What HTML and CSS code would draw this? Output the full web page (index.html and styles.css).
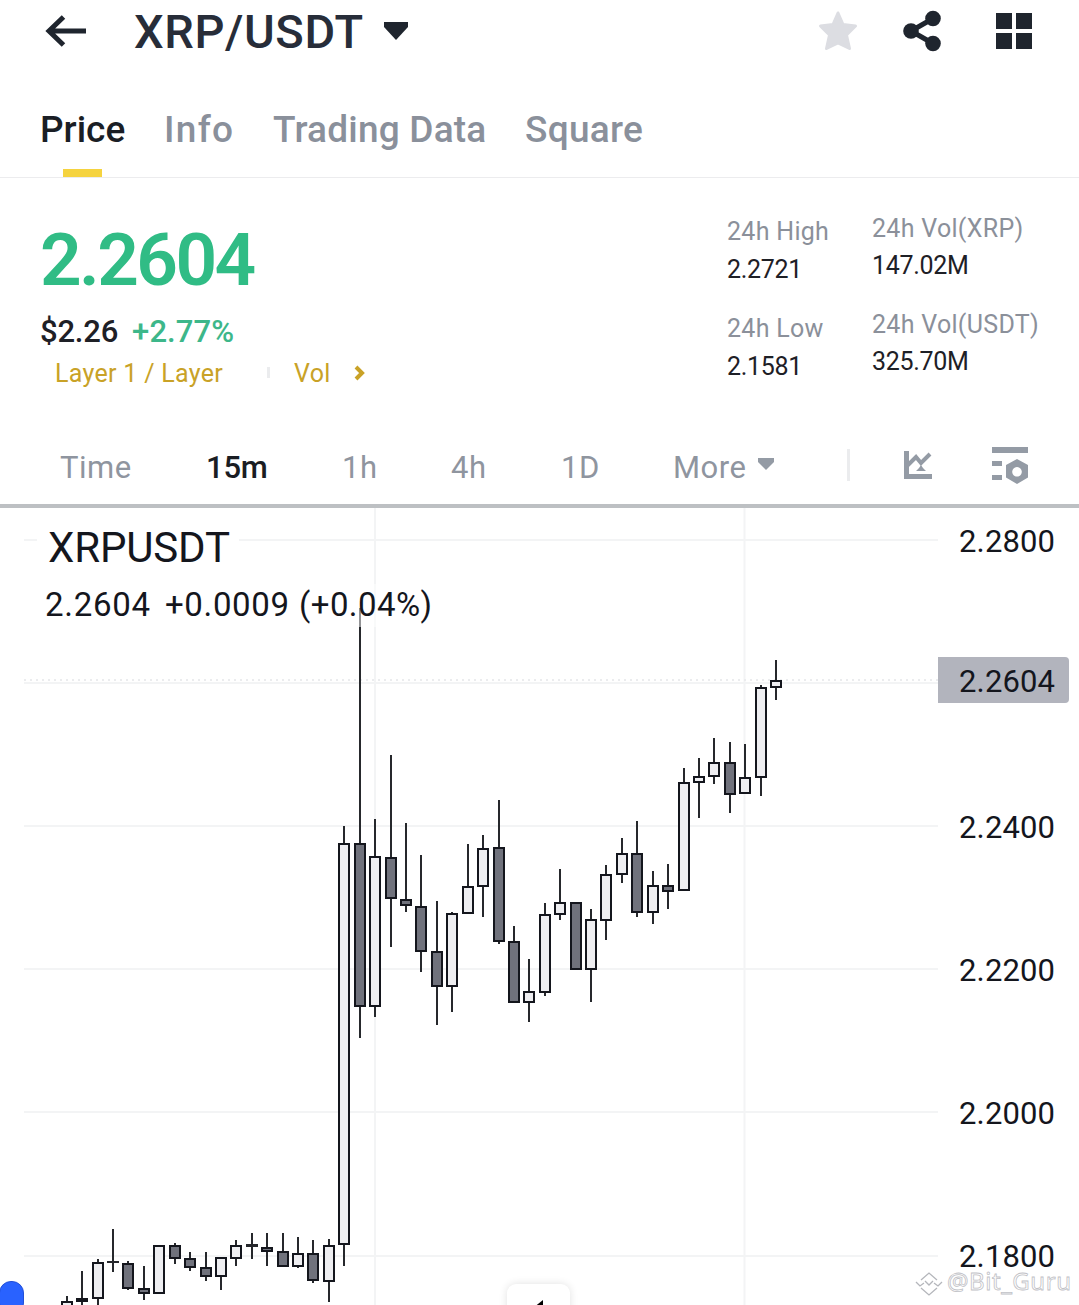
FILE: index.html
```html
<!DOCTYPE html>
<html lang="en">
<head>
    <meta charset="UTF-8" />
    <meta name="viewport" content="width=device-width, initial-scale=1" />
    <title>XRP/USDT</title>
    <link rel="stylesheet" href="styles.css">
</head>
<body>
    <header class="top_bar">
        <svg class="back" width="42" height="34" viewBox="0 0 42 34">
            <path d="M18.500 3L4 17l14.500 14M4 17h37" />
        </svg>
        <h1>XRP/USDT</h1>
        <svg class="pair_arrow" width="24" height="18" viewBox="0 0 24 18">
            <path d="M0 0h24v5L12 18 0 5z" />
        </svg>
        <div class="top_icons">
            <svg width="40" height="42" viewBox="0 0 40 42">
                <path class="star" d="M20 3l5 11.500 12.500 1.500-9 9 3 13.500L20 33 8.500 38.500l3-13.500-9-9L15 14.500z" />
            </svg>
            <svg width="40" height="42" viewBox="0 0 40 42">
                <path class="share_line" d="M31 8.500L9 21l22 12.500" />
                <circle cx="31" cy="8.500" r="7.800" />
                <circle cx="9" cy="21" r="7.800" />
                <circle cx="31" cy="33.500" r="7.800" />
            </svg>
            <svg width="36" height="36" viewBox="0 0 36 36">
                <path d="M0 0h16v16H0zM20 0h16v16H20zM0 20h16v16H0zM20 20h16v16H20z" />
            </svg>
        </div>
    </header>

    <nav class="tabs">
        <a class="tab active">Price</a>
        <a class="tab info">Info</a>
        <a class="tab data">Trading Data</a>
        <a class="tab square">Square</a>
    </nav>

    <section class="summary">
        <div class="price_block">
            <div class="last_price">2.2604</div>
            <div class="change_row">
                <span class="usd">$2.26</span>
                <span class="change">+2.77%</span>
            </div>
            <div class="tags">
                <span class="layer">Layer 1 / Layer</span>
                <span class="tag_line"></span>
                <span class="vol">Vol</span>
                <svg width="11" height="16" viewBox="0 0 11 16">
                    <path d="M2 2l6 6-6 6" />
                </svg>
            </div>
        </div>
        <div class="stats high_low">
            <div class="stat_name">24h High</div>
            <div class="stat_value">2.2721</div>
            <div class="stat_name">24h Low</div>
            <div class="stat_value">2.1581</div>
        </div>
        <div class="stats volumes">
            <div class="stat_name">24h Vol(XRP)</div>
            <div class="stat_value">147.02M</div>
            <div class="stat_name">24h Vol(USDT)</div>
            <div class="stat_value">325.70M</div>
        </div>
    </section>

    <div class="intervals">
        <span class="time">Time</span>
        <span class="m15 active">15m</span>
        <span class="h1">1h</span>
        <span class="h4">4h</span>
        <span class="d1">1D</span>
        <span class="more">More</span>
        <svg class="more_arrow" width="16" height="12" viewBox="0 0 16 12">
            <path d="M0 0h16v4L8 12 0 4z" />
        </svg>
        <i class="interval_line"></i>
        <svg class="chart_icon" width="28" height="28" viewBox="0 0 28 28">
            <path d="M0 0h5v23h23v5H0z" />
            <path class="zigzag" d="M3 15l9-9 5 6 9-9" />
            <path d="M17 14l2 3 3 3h-10l3-3z" />
        </svg>
        <svg class="settings_icon" width="36" height="37" viewBox="0 0 36 37">
            <path d="M0 0h36v6H0zM0 14h10v5H0zM0 28h10v5H0z" />
            <path fill-rule="evenodd" d="M25 12l11 6v12.500L25 37l-11-6.500V18zM25 20a4.800 4.800 0 1 0 .01 0z" />
        </svg>
    </div>

    <main class="chart_box">
        <svg class="chart" width="1079" height="797" viewBox="0 508 1079 797">
            <g class="grid">
                <path d="M24 540H938M24 683H938M24 826H938M24 969H938M24 1112H938M24 1256H938" />
                <path d="M375 508V1305M744.500 508V1305" />
            </g>
            <path class="last_line" d="M24 680H938" />
            <g id="candles"></g>

            <rect class="legend_bg" x="37" y="520" width="202" height="56" />
            <rect class="legend_bg2" x="37" y="584" width="403" height="43" />
            <text class="symbol" x="48" y="562" textLength="182">XRPUSDT</text>
            <text class="legend" x="45" y="616" textLength="105">2.2604</text>
            <text class="legend" x="165" y="616" textLength="124">+0.0009</text>
            <text class="legend" x="299" y="616" textLength="133">(+0.04%)</text>

            <path class="price_tag" d="M938 657h127a4 4 0 0 1 4 4v38a4 4 0 0 1-4 4H938z" />
            <g class="axis">
                <text x="959" y="552" textLength="96">2.2800</text>
                <text x="959" y="692" textLength="96">2.2604</text>
                <text x="959" y="838" textLength="96">2.2400</text>
                <text x="959" y="981" textLength="96">2.2200</text>
                <text x="959" y="1124" textLength="96">2.2000</text>
                <text x="959" y="1267" textLength="96">2.1800</text>
            </g>

            <g class="watermark">
                <path d="M921 1280l8-7 8 7M916 1282l4 4 4-3M934 1283l4 3 4-4M925 1281l4 4 4-4M921 1288l8 7 8-7" />
                <text x="947" y="1290" textLength="124">@Bit_Guru</text>
            </g>
        </svg>
        <div class="blue_button"></div>
        <div class="collapse_button">
            <svg width="16" height="16" viewBox="0 0 16 16">
                <path d="M12 1v15H2V9z" />
            </svg>
        </div>
    </main>

    <script src="script.js"></script>
</body>
</html>
```
FILE: styles.css
```css
* {
    box-sizing: border-box;
}
body, html {
    margin: 0;
    padding: 0;
    height: 1305px;
    overflow: hidden;
    font-family: Roboto, "Liberation Sans", sans-serif;
    background-color: #fff;
    color: #1e2329;
}
svg {
    display: block;
    flex: none;
}
.top_bar {
    display: flex;
    align-items: center;
    height: 61px;
    padding: 0 47px 0 45px;
    fill: #1f252e;
}
.back path {
    fill: none;
    stroke: #1f252e;
    stroke-width: 5;
}
.top_bar h1 {
    width: 228px;
    margin: 3px 0 0 47px;
    font-size: 47px;
    font-weight: 500;
    line-height: 62px;
    letter-spacing: 0.6px;
    color: #272d39;
    white-space: nowrap;
}
.pair_arrow {
    margin-left: 22px;
}
.top_icons {
    display: flex;
    align-items: center;
    gap: 44px;
    margin-left: auto;
}
.top_icons svg:last-child {
    margin-left: 10px;
}
.star {
    fill: #dcdde2;
    stroke: #dcdde2;
    stroke-width: 3;
    stroke-linejoin: round;
}
.share_line {
    fill: none;
    stroke: #1f252e;
    stroke-width: 5;
}
.tabs {
    display: flex;
    height: 117px;
    padding: 45px 0 0 40px;
    border-bottom: 1px solid #ececee;
    font-size: 37px;
    font-weight: 500;
    line-height: 48px;
    color: #8a909b;
    white-space: nowrap;
}
.tab {
    position: relative;
    width: 84px;
    margin-right: 40px;
}
.tab.active {
    color: #1a1e25;
}
.tab.active::after {
    content: "";
    position: absolute;
    left: 23px;
    bottom: 0;
    width: 39px;
    height: 8px;
    background-color: #f5d33f;
}
.tab.info {
    width: 69px;
    letter-spacing: 1.3px;
}
.tab.data {
    width: 212px;
    letter-spacing: 0.2px;
}
.tab.square {
    letter-spacing: 0.3px;
}
.summary {
    display: flex;
    height: 252px;
}
.price_block {
    width: 727px;
    padding: 42px 0 0 40px;
}
.last_price {
    font-size: 73px;
    font-weight: 600;
    line-height: 80px;
    letter-spacing: -2.6px;
    color: #30bc85;
}
.change_row {
    display: flex;
    gap: 14px;
    margin-top: 12px;
    font-size: 31px;
    font-weight: 500;
    line-height: 40px;
    letter-spacing: -0.2px;
    color: #1e2026;
}
.change_row .change {
    letter-spacing: 0.1px;
    color: #3db78a;
}
.tags {
    display: flex;
    align-items: center;
    margin-top: 2px;
    padding-left: 15px;
    font-size: 25px;
    line-height: 40px;
    letter-spacing: 0.3px;
    color: #c9a227;
}
.layer {
    width: 212px;
}
.tag_line {
    width: 3px;
    height: 11px;
    margin: -3px 24px 0 0;
    background-color: #ebecee;
}
.vol {
    width: 60px;
}
.tags svg {
    margin-top: -3px;
}
.tags path {
    fill: none;
    stroke: #c9a227;
    stroke-width: 4;
}
.stats {
    padding-top: 35px;
    font-size: 25px;
    white-space: nowrap;
}
.high_low {
    width: 145px;
    padding-top: 38px;
}
.stat_name {
    height: 32px;
    line-height: 32px;
    letter-spacing: 0.3px;
    color: #8b909a;
}
.stat_value {
    height: 44px;
    margin: 6px 0 15px;
    line-height: 32px;
    letter-spacing: -0.3px;
    color: #1e2026;
}
.volumes .stat_value {
    height: 45px;
    margin: 5px 0 14px;
}
.intervals {
    display: flex;
    align-items: center;
    height: 78px;
    padding: 0 0 0 60px;
    border-bottom: 4px solid #bdc0c3;
    font-size: 31px;
    letter-spacing: 0.5px;
    color: #8f959f;
    fill: #949ba5;
}
.time {
    width: 146px;
}
.intervals .active {
    width: 136px;
    font-weight: 500;
    letter-spacing: -0.2px;
    color: #1a1d23;
}
.h1 {
    width: 109px;
}
.h4 {
    width: 110px;
}
.d1 {
    width: 112px;
}
.more {
    width: 85px;
}
.more_arrow {
    margin-top: -6px;
}
.interval_line {
    width: 3px;
    height: 32px;
    margin: -4px 54px 0 73px;
    background-color: #ebecee;
}
.chart_icon {
    margin-top: -4px;
}
.zigzag {
    fill: none;
    stroke: #949ba5;
    stroke-width: 4;
}
.settings_icon {
    margin: -3px 0 0 60px;
}
.chart_box {
    position: relative;
    height: 797px;
    overflow: hidden;
}
.grid path {
    fill: none;
    stroke: #f3f4f5;
    stroke-width: 2;
}
.last_line {
    stroke: #ebecee;
    stroke-width: 2;
    stroke-dasharray: 2 4;
}
.wick {
    fill: #26282c;
}
.candle {
    stroke: #14161d;
    stroke-width: 2;
}
.up {
    fill: #eeeef1;
}
.down {
    fill: #70727c;
}
.legend_bg {
    fill: #fff;
}
.legend_bg2 {
    fill: rgb(255 255 255 / 0.5);
}
.symbol {
    font-size: 42px;
    fill: #14161d;
}
.legend {
    font-size: 33px;
    fill: #14161d;
}
.axis {
    font-size: 31px;
    fill: #14161d;
}
.price_tag {
    fill: #b2b4bd;
}
.watermark path {
    fill: none;
    stroke: #b4b6bb;
    stroke-width: 1.3;
}
.watermark text {
    font-family: "Noto Sans", sans-serif;
    font-size: 24px;
    fill: #fff;
    stroke: #bfc1c6;
    stroke-width: 0.8;
}
.blue_button {
    position: absolute;
    left: -1px;
    bottom: -10px;
    width: 25px;
    height: 34px;
    border: 1px solid #2250d8;
    border-radius: 12px;
    background-color: #2962ff;
}
.collapse_button {
    position: absolute;
    left: 507px;
    bottom: -42px;
    width: 63px;
    height: 63px;
    padding: 15px 0 0 24px;
    border-radius: 9px;
    background-color: #fff;
    box-shadow: 0 0 8px rgb(0 0 0 / 0.12);
}
```
FILE: script.js
```js
// x, high, body top, body bottom, low, direction
const candles = [
    [67, 1296, 1301, 1312, 1312, 'up'],
    [82, 1271, 1298, 1302, 1308, 'down'],
    [98, 1259, 1262, 1299, 1308, 'up'],
    [113, 1229, 1261, 1263, 1272, 'down'],
    [128, 1261, 1263, 1289, 1290, 'down'],
    [144, 1266, 1288, 1294, 1300, 'down'],
    [159, 1245, 1245, 1294, 1294, 'up'],
    [175, 1243, 1245, 1259, 1264, 'down'],
    [190, 1252, 1258, 1268, 1271, 'down'],
    [206, 1252, 1267, 1277, 1281, 'down'],
    [221, 1257, 1257, 1277, 1290, 'up'],
    [236, 1240, 1245, 1259, 1266, 'up'],
    [252, 1233, 1244, 1247, 1259, 'down'],
    [267, 1233, 1247, 1252, 1266, 'down'],
    [283, 1233, 1251, 1267, 1267, 'down'],
    [298, 1237, 1253, 1267, 1268, 'up'],
    [313, 1240, 1253, 1281, 1283, 'down'],
    [329, 1239, 1245, 1282, 1302, 'up'],
    [344, 826, 843, 1245, 1266, 'up'],
    [360, 608, 843, 1007, 1038, 'down'],
    [375, 819, 856, 1007, 1017, 'up'],
    [391, 755, 857, 899, 947, 'down'],
    [406, 823, 899, 906, 912, 'down'],
    [421, 855, 906, 952, 972, 'down'],
    [437, 901, 951, 987, 1025, 'down'],
    [452, 912, 913, 987, 1012, 'up'],
    [468, 844, 886, 914, 914, 'up'],
    [483, 835, 848, 887, 917, 'up'],
    [499, 800, 847, 942, 944, 'down'],
    [514, 926, 941, 1003, 1003, 'down'],
    [529, 959, 991, 1003, 1022, 'up'],
    [545, 903, 914, 993, 996, 'up'],
    [560, 869, 902, 915, 920, 'up'],
    [576, 902, 902, 970, 970, 'down'],
    [591, 909, 919, 970, 1002, 'up'],
    [606, 865, 874, 921, 940, 'up'],
    [622, 838, 853, 875, 883, 'up'],
    [637, 821, 853, 913, 917, 'down'],
    [653, 871, 885, 913, 924, 'up'],
    [668, 864, 885, 892, 909, 'down'],
    [684, 768, 782, 891, 891, 'up'],
    [699, 758, 776, 783, 818, 'up'],
    [714, 738, 762, 777, 784, 'up'],
    [730, 742, 762, 795, 813, 'down'],
    [745, 744, 777, 794, 794, 'up'],
    [761, 685, 687, 778, 796, 'up'],
    [776, 660, 680, 688, 700, 'up']
];

const group = document.getElementById('candles');

function addRect(x, y, width, height, className) {
    const rect = document.createElementNS('http://www.w3.org/2000/svg', 'rect');
    rect.setAttribute('x', x);
    rect.setAttribute('y', y);
    rect.setAttribute('width', width);
    rect.setAttribute('height', height);
    rect.setAttribute('class', className);
    group.appendChild(rect);
}

candles.forEach(([x, high, top, bottom, low, dir]) => {
    addRect(x - 1, high, 2, low - high, 'wick');
    if (bottom - top < 4) {
        addRect(x - 6, top, 12, bottom - top, 'wick');
    } else {
        addRect(x - 5, top + 1, 10, bottom - top - 2, 'candle ' + dir);
    }
});
```
